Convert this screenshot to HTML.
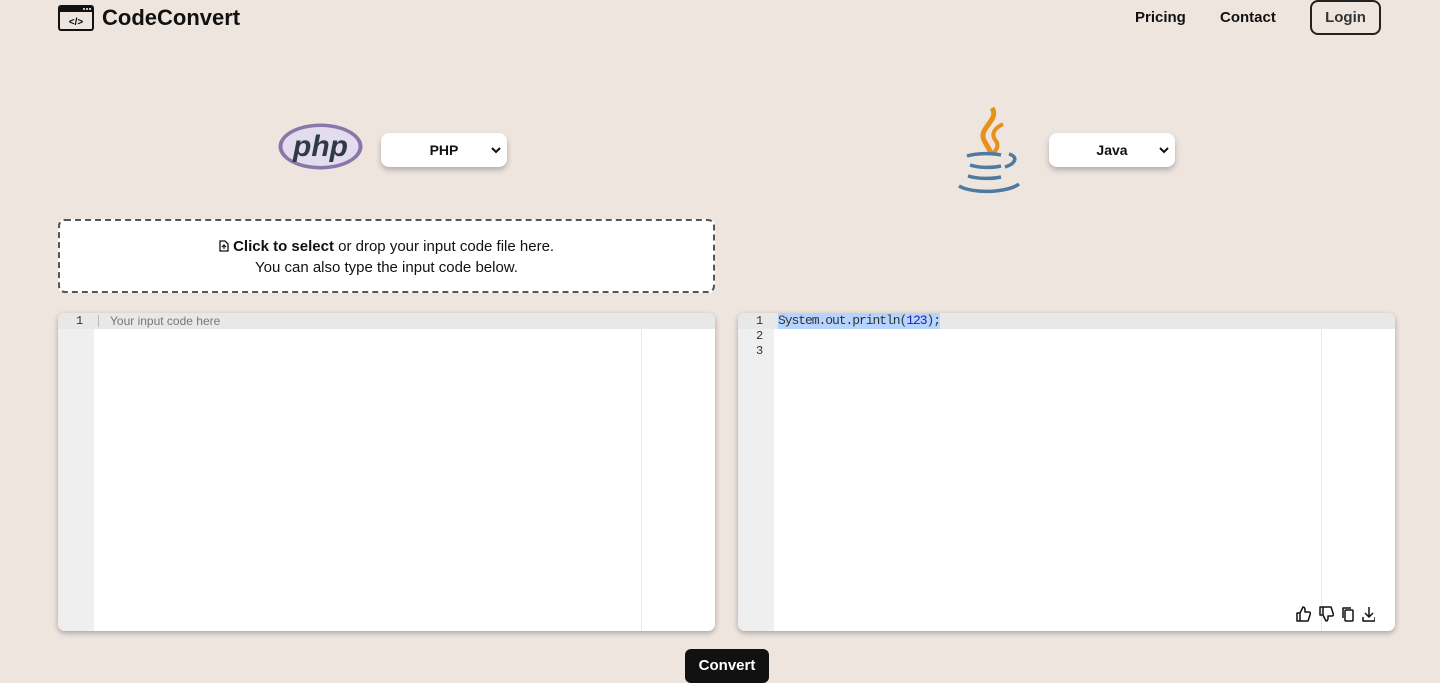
<!DOCTYPE html>
<html><head><meta charset="utf-8"><style>
*{box-sizing:border-box;margin:0;padding:0}
body{width:1440px;height:679px;overflow:hidden;background:#efe5df;font-family:"Liberation Sans",sans-serif;position:relative;color:#111}
.abs{position:absolute}
.nav{font-weight:bold;font-size:15px}
.sel{position:absolute;width:126px;height:34px;background:#fff;border-radius:8px;box-shadow:0 3px 6px rgba(0,0,0,.25);font-size:14px;font-weight:bold;text-align:center;line-height:34px}
.sel svg{position:absolute;right:6px;top:13px}
.ed{position:absolute;top:313px;width:657px;height:318px;background:#fff;border-radius:7px;box-shadow:0 2px 6px rgba(0,0,0,.3);overflow:hidden}
.gut{position:absolute;left:0;top:0;bottom:0;width:36px;background:#efefef}
.hl{position:absolute;left:0;right:0;top:0;height:16px;background:#e8e8e8}
.pm{position:absolute;left:583px;top:0;bottom:0;width:1px;background:#e8e8e8}
.mono{font-family:"Liberation Mono",monospace;font-size:12px;line-height:15px}
</style></head><body>
<svg class="abs" style="left:58px;top:5px" width="36" height="26" viewBox="0 0 36 26"><rect x="1" y="1" width="34" height="24" rx="2" fill="none" stroke="#111" stroke-width="2"/><rect x="1" y="1" width="34" height="6" fill="#111"/><circle cx="26" cy="4" r="1" fill="#fff"/><circle cx="29" cy="4" r="1" fill="#fff"/><circle cx="32" cy="4" r="1" fill="#fff"/><text x="18" y="20" font-size="10" font-weight="bold" text-anchor="middle" font-family="Liberation Sans">&lt;/&gt;</text></svg>
<div class="abs" style="left:102px;top:5px;font-size:22px;font-weight:bold">CodeConvert</div>
<div class="abs nav" style="left:1135px;top:9px">Pricing</div>
<div class="abs nav" style="left:1220px;top:9px">Contact</div>
<div class="abs nav" style="left:1310px;top:0px;width:71px;height:35px;border:2px solid #222;border-radius:8px;text-align:center;line-height:31px;color:#333">Login</div>
<svg class="abs" style="left:277px;top:122px" width="87" height="49" viewBox="0 0 87 49"><ellipse cx="43.5" cy="24.5" rx="42" ry="23" fill="#8a77a9"/><ellipse cx="43.5" cy="24.5" rx="38" ry="19.5" fill="#e2dcee"/><text x="43.5" y="34" font-size="30" font-weight="bold" font-style="italic" text-anchor="middle" fill="#2f3a46" font-family="Liberation Sans">php</text></svg>
<div class="sel" style="left:381px;top:133px">PHP<svg width="10" height="8" viewBox="0 0 10 8"><path d="M1 2l4 4 4-4" stroke="#111" stroke-width="2" fill="none"/></svg></div>
<svg class="abs" style="left:955px;top:106px" width="70" height="88" viewBox="0 0 70 88"><path d="M37 2c8 12-14 20-8 32 2 5 6 9 7 14" stroke="#e8901c" stroke-width="5" fill="none"/><path d="M48 18c-10 5-12 11-7 17 3 4 1 9-3 12" stroke="#e8901c" stroke-width="4" fill="none"/><path d="M12 50c10-3 26-3 34-1M54 48c10 3 6 10-4 13M15 59c9 3 22 3 31 1M13 70c10 3 24 3 33 1M4 80c14 8 48 7 60-2" stroke="#4d7aa0" stroke-width="3.5" fill="none"/></svg>
<div class="sel" style="left:1049px;top:133px">Java<svg width="10" height="8" viewBox="0 0 10 8"><path d="M1 2l4 4 4-4" stroke="#111" stroke-width="2" fill="none"/></svg></div>
<div class="abs" style="left:58px;top:219px;width:657px;height:74px;background:#fff;border:2px dashed #555;border-radius:7px;text-align:center;font-size:15px;line-height:21px;padding-top:15px">
<svg width="10" height="12" viewBox="0 0 10 12" style="vertical-align:-1px"><path d="M1 1h5l3 3v7H1z" fill="none" stroke="#111" stroke-width="1.3"/><path d="M5 9V5M3 7l2-2 2 2" stroke="#111" stroke-width="1.2" fill="none"/></svg> <b>Click to select</b> or drop your input code file here.<br>You can also type the input code below.</div>
<div class="ed" style="left:58px"><div class="gut"></div><div class="hl"></div><div class="pm"></div>
<div class="abs mono" style="left:18px;top:1px;color:#333">1</div>
<div class="abs" style="left:40px;top:2px;width:1px;height:12px;background:#bbb"></div>
<div class="abs" style="left:52px;top:1px;font-size:12px;color:#777">Your input code here</div></div>
<div class="ed" style="left:738px"><div class="gut"></div><div class="hl"></div><div class="pm"></div>
<div class="abs mono" style="left:18px;top:1px;color:#333">1<br>2<br>3</div>
<div class="abs mono" style="left:40px;top:0px;font-size:13px;line-height:16px;background:#b5d5ff;color:#333;letter-spacing:-1.05px">System.out.println(<span style="color:#22a">123</span>);</div>
<svg class="abs" style="left:557px;top:292px" width="80" height="18" viewBox="0 0 80 18" fill="none" stroke="#111" stroke-width="1.5" stroke-linejoin="round">
<path d="M2 8h3v8H2zM5 8l3-6c2 0 2 2 2 3v2h4c1 0 2 1 1 3l-2 6H5"/>
<path d="M25 10h3V2h-3zM28 10l3 6c2 0 2-2 2-3v-2h4c1 0 2-1 1-3l-2-6h-8"/>
<rect x="50" y="5" width="8" height="11" rx="1"/><path d="M48 13V3h8"/>
<path d="M74 2v9M70 8l4 4 4-4M68 12v4h12v-4"/></svg></div>
<div class="abs" style="left:685px;top:649px;width:84px;height:34px;background:#111;color:#fff;border-radius:6px;font-weight:bold;font-size:15px;text-align:center;line-height:34px">Convert</div>
</body></html>
